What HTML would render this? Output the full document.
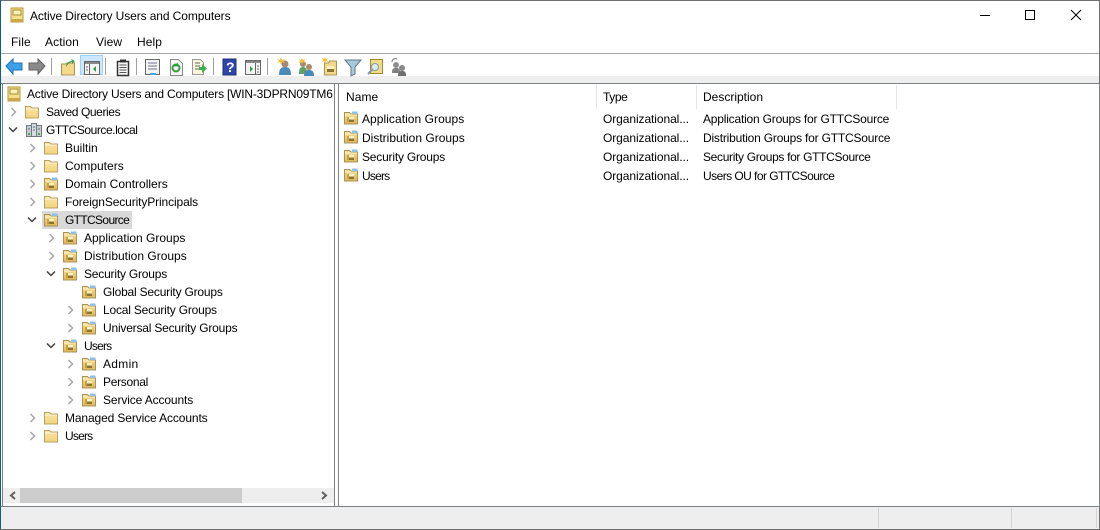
<!DOCTYPE html>
<html><head><meta charset="utf-8"><style>
html,body{margin:0;padding:0;background:#fff}
#w{position:relative;width:1100px;height:530px;overflow:hidden;background:#fff;font-family:"Liberation Sans",sans-serif;font-size:12px;color:#000}
#w div{position:absolute}
.t{white-space:nowrap;line-height:18px;height:18px;letter-spacing:-.2px}
.m{letter-spacing:.1px}
.z{letter-spacing:0}
.u{letter-spacing:-.8px}
.o{letter-spacing:-.08px}
svg{position:absolute;overflow:visible}
</style></head><body><div id="w">
<svg width="0" height="0" style="position:absolute"><defs>
<linearGradient id="g1" x1="0" y1="0" x2="0" y2="1"><stop offset="0" stop-color="#fbe6a4"/><stop offset="1" stop-color="#f3d37e"/></linearGradient>
<linearGradient id="g2" x1="0" y1="0" x2="0" y2="1"><stop offset="0" stop-color="#f9e29a"/><stop offset="1" stop-color="#dfb45a"/></linearGradient>
<symbol id="f" viewBox="0 0 16 14"><path d="M1.500 3V1.500h5L8 3h6.500v10h-13z" fill="url(#g1)" stroke="#b8a060"/><path d="M2 4h12" stroke="#fff6d6"/></symbol>
<symbol id="o" viewBox="0 0 16 14"><path d="M1.500 3V1.500h5L8 3h6.500v10h-13z" fill="url(#g2)" stroke="#a89458"/><rect x="9" y=".5" width="5.500" height="2.500" fill="#8fbfe6"/><path d="M2 4h12" stroke="#fff3c8"/><rect x="4" y="6" width="7" height="5" fill="#fdf2c4"/><rect x="4" y="6" width="2" height="5" fill="#c9a23e"/><rect x="6" y="8.500" width="5" height="2.500" fill="#8a7430"/></symbol>
<symbol id="c" viewBox="0 0 8 10"><path d="M1.500 1l4 4-4 4" fill="none" stroke="#a6a6a6" stroke-width="1.500"/></symbol>
<symbol id="d" viewBox="0 0 10 8"><path d="M1 1.500l4 4 4-4" fill="none" stroke="#404040" stroke-width="1.500"/></symbol>
<symbol id="b" viewBox="0 0 16 16"><rect x="2" y="1" width="12" height="14" fill="#f6e08c" stroke="#b59a3c"/><rect x="4" y="3" width="8" height="5" fill="#fbf0b8" stroke="#a68c34"/><rect x="2" y="12" width="12" height="3" fill="#c9a84a"/></symbol>
</defs></svg>

<!-- window frame -->
<div style="left:0;top:0;width:1100px;height:1px;background:#6e6e6e"></div>
<div style="left:0;top:0;width:1px;height:530px;background:#0f6080"></div>
<div style="left:1099px;top:0;width:1px;height:530px;background:#6e6e6e"></div>
<div style="left:0;top:529px;width:1100px;height:1px;background:#6e6e6e"></div>

<!-- title -->
<svg style="left:9px;top:7px" width="16" height="16"><use href="#b" width="16" height="16"/></svg>
<div class="t" style="left:30px;top:7px;letter-spacing:-.1px">Active Directory Users and Computers</div>
<svg style="left:980px;top:8px" width="100" height="16"><path d="M0 7.500h10" stroke="#000"/><rect x="45.500" y="2.500" width="9" height="9" fill="none" stroke="#000" stroke-width="1"/><path d="M91 2l10 10M101 2L91 12" stroke="#000" fill="none"/></svg>

<!-- menu -->
<div class="t m" style="left:11px;top:33px">File</div>
<div class="t m" style="left:45px;top:33px">Action</div>
<div class="t m" style="left:96px;top:33px">View</div>
<div class="t m" style="left:137px;top:33px">Help</div>
<div style="left:1px;top:53px;width:1098px;height:1px;background:#a5a5ad"></div>

<!-- toolbar -->
<div style="left:1px;top:76px;width:1098px;height:7px;background:#eeeeee"></div>
<div style="left:1px;top:83px;width:1098px;height:1px;background:#7d8287"></div>
<div style="left:80px;top:55px;width:23px;height:20px;background:#cce8ff;border:1px solid #99d1ff;box-sizing:border-box"></div>
<svg style="left:0;top:54px" width="420" height="24">
<path d="M6 12l7-7v4h9v7h-9v4z" fill="#3da0e8" stroke="#2270b8"/>
<path d="M45 12l-7-7v4h-9v7h9v4z" fill="#8a8a8a" stroke="#606060"/>
<path d="M51.500 4v17M105.500 4v17M136.500 4v17M213.500 4v17M267.500 4v17" stroke="#a0a0a0"/>
<path d="M61.500 10h4l1-1h8v12h-13z" fill="#f5d888" stroke="#a89458"/><path d="M66 13c0-4 3-6 6-6l-1-2 4 2-3 3v-2c-2 0-4 2-6 5z" fill="#38a048"/>
<rect x="84.500" y="7.500" width="15" height="13" fill="#f4f4f4" stroke="#666"/><rect x="85" y="8" width="14" height="2" fill="#888"/><path d="M89.500 10v10" stroke="#666"/><path d="M96 12v6l-3-3z" fill="#30a040"/><path d="M86 13h2M86 16h2" stroke="#666"/>
<rect x="117.500" y="7.500" width="11" height="14" fill="#f8f8f8" stroke="#333" stroke-width="1.500"/><rect x="120" y="5.500" width="6" height="3" fill="#333"/><path d="M119.500 11h7M119.500 13.500h7M119.500 16h7M119.500 18.500h7" stroke="#555"/>
<rect x="145.500" y="5.500" width="14" height="15" fill="#f0f2f4" stroke="#666"/><path d="M148 9h9M148 12h9M148 15h9" stroke="#778"/><rect x="150" y="19" width="6" height="2" fill="#40a8e0"/>
<path d="M170.500 5.500h8l4 4v12h-12z" fill="#f6f6f6" stroke="#888"/><circle cx="176" cy="14" r="3.500" fill="none" stroke="#30a040" stroke-width="2"/><path d="M178 8.500v4h-4z" fill="#30a040"/>
<path d="M192.500 5.500h8l3 3v12h-11z" fill="#fbf6dc" stroke="#999"/><path d="M195 9h5M195 12h5M195 15h4" stroke="#666"/><path d="M199 13h3v-3l5 4.500-5 4.500v-3h-3z" fill="#40b050"/>
<rect x="223" y="5" width="13" height="16" fill="#2f45a8" stroke="#1c2c78"/><text x="226" y="18" font-family="Liberation Sans" font-size="14" font-weight="bold" fill="#fff">?</text>
<rect x="245.500" y="6.500" width="15" height="14" fill="#f4f4f4" stroke="#666"/><rect x="246" y="7" width="14" height="2" fill="#888"/><path d="M255.500 9v11" stroke="#666"/><path d="M250 12v6l3-3z" fill="#30a040"/><path d="M257 12h2M257 15h2M257 18h2" stroke="#666"/>
<circle cx="285" cy="10" r="3.500" fill="#a88870"/><path d="M279 21c0-6 2-8 6-8s6 2 6 8z" fill="#4a8ab8"/><path d="M280 6l1-3 1 3 3-1-2 2 2 2-3-1-1 3-1-3-3 1 2-2-2-2z" fill="#f8c030"/>
<circle cx="303" cy="10" r="3" fill="#a88870"/><path d="M299 20c0-5 1-7 4-7s4 2 4 7z" fill="#60a060"/><circle cx="309" cy="13" r="3" fill="#a88870"/><path d="M304 22c0-5 2-6 5-6s5 1 5 6z" fill="#4a8ab8"/><path d="M302 4l1 2 2-1-1 2 1 2-2-1-1 2-1-2-2 1 1-2-1-2 2 1z" fill="#f8c030"/>
<path d="M324.500 9h4l1-2h7v14h-12z" fill="#f5d888" stroke="#a89458"/><rect x="327" y="12" width="7" height="6" fill="#fdf2c4"/><rect x="327" y="15" width="7" height="3" fill="#8a7430"/><path d="M325 3l1 2 2-1-1 2 1 2-2-1-1 2-1-2-2 1 1-2-1-2 2 1z" fill="#f8c030"/>
<path d="M345 6h16l-6 7v7l-4 2v-9z" fill="#a8c8dc" stroke="#607888"/>
<rect x="370.500" y="5.500" width="12" height="14" fill="#f0dc88" stroke="#a08a30"/><circle cx="375" cy="13" r="3.500" fill="#dcecf4" stroke="#8098a8"/><path d="M372 16l-4 4" stroke="#8098a8" stroke-width="2"/>
<circle cx="396" cy="11" r="3" fill="#909090"/><path d="M392 19c0-4 1-5 4-5s4 1 4 5z" fill="#808080"/><circle cx="402" cy="14" r="3" fill="#888"/><path d="M398 22c0-4 1-5 4-5s4 1 4 5z" fill="#707070"/><path d="M392 8c0-3 3-4 5-3" fill="none" stroke="#777"/>
</svg>

<!-- panes -->
<div style="left:2px;top:83px;width:331px;height:423px;border:1px solid #7d8287;background:#fff"></div>
<div style="left:338px;top:83px;width:760px;height:423px;border:1px solid #7d8287;background:#fff"></div>

<!-- selected -->
<div style="left:42px;top:211px;width:90px;height:18px;background:#d9d9d9"></div>

<!-- tree text -->
<div class="t" style="left:27px;top:85px;width:307px;overflow:hidden">Active Directory Users and Computers [WIN-3DPRN09TM6</div>
<div class="t" style="left:46px;top:103px;letter-spacing:-.4px">Saved Queries</div>
<div class="t" style="left:46px;top:121px;letter-spacing:-.45px">GTTCSource.local</div>
<div class="t z" style="left:65px;top:139px">Builtin</div>
<div class="t z" style="left:65px;top:157px">Computers</div>
<div class="t z" style="left:65px;top:175px">Domain Controllers</div>
<div class="t" style="left:65px;top:193px;letter-spacing:-.12px">ForeignSecurityPrincipals</div>
<div class="t" style="left:65px;top:211px;letter-spacing:-.65px">GTTCSource</div>
<div class="t z" style="left:84px;top:229px">Application Groups</div>
<div class="t z" style="left:84px;top:247px">Distribution Groups</div>
<div class="t" style="left:84px;top:265px">Security Groups</div>
<div class="t" style="left:103px;top:283px">Global Security Groups</div>
<div class="t" style="left:103px;top:301px">Local Security Groups</div>
<div class="t" style="left:103px;top:319px">Universal Security Groups</div>
<div class="t u" style="left:84px;top:337px">Users</div>
<div class="t" style="left:103px;top:355px;letter-spacing:.3px">Admin</div>
<div class="t" style="left:103px;top:373px;letter-spacing:-.3px">Personal</div>
<div class="t" style="left:103px;top:391px;letter-spacing:-.12px">Service Accounts</div>
<div class="t" style="left:65px;top:409px;letter-spacing:-.12px">Managed Service Accounts</div>
<div class="t u" style="left:65px;top:427px">Users</div>

<!-- tree icons -->
<svg style="left:0;top:0" width="340" height="480">
<use href="#b" x="6" y="86" width="16" height="16"/>
<use href="#f" x="24" y="105" width="16" height="14"/>
<use href="#f" x="43" y="141" width="16" height="14"/>
<use href="#f" x="43" y="159" width="16" height="14"/>
<use href="#o" x="43" y="177" width="16" height="14"/>
<use href="#f" x="43" y="195" width="16" height="14"/>
<use href="#o" x="43" y="213" width="16" height="14"/>
<use href="#o" x="62" y="231" width="16" height="14"/>
<use href="#o" x="62" y="249" width="16" height="14"/>
<use href="#o" x="62" y="267" width="16" height="14"/>
<use href="#o" x="81" y="285" width="16" height="14"/>
<use href="#o" x="81" y="303" width="16" height="14"/>
<use href="#o" x="81" y="321" width="16" height="14"/>
<use href="#o" x="62" y="339" width="16" height="14"/>
<use href="#o" x="81" y="357" width="16" height="14"/>
<use href="#o" x="81" y="375" width="16" height="14"/>
<use href="#o" x="81" y="393" width="16" height="14"/>
<use href="#f" x="43" y="411" width="16" height="14"/>
<use href="#f" x="43" y="429" width="16" height="14"/>
<!-- domain icon -->
<rect x="26.500" y="125.500" width="5" height="11" fill="#c8ccd0" stroke="#707880"/><rect x="31.500" y="123.500" width="5" height="13" fill="#d8dce0" stroke="#707880"/><rect x="36.500" y="125.500" width="5" height="11" fill="#c8ccd0" stroke="#707880"/><path d="M28 129h2M33 127h2M33 130h2M38 129h2" stroke="#606870"/><rect x="28" y="133" width="2" height="2" fill="#40b040"/><rect x="38" y="133" width="2" height="2" fill="#40b040"/>
<!-- chevrons -->
<use href="#c" x="10" y="107" width="8" height="10"/>
<use href="#d" x="8" y="126" width="10" height="8"/>
<use href="#c" x="29" y="143" width="8" height="10"/>
<use href="#c" x="29" y="161" width="8" height="10"/>
<use href="#c" x="29" y="179" width="8" height="10"/>
<use href="#c" x="29" y="197" width="8" height="10"/>
<use href="#d" x="27" y="216" width="10" height="8"/>
<use href="#c" x="48" y="233" width="8" height="10"/>
<use href="#c" x="48" y="251" width="8" height="10"/>
<use href="#d" x="46" y="270" width="10" height="8"/>
<use href="#c" x="67" y="305" width="8" height="10"/>
<use href="#c" x="67" y="323" width="8" height="10"/>
<use href="#d" x="46" y="342" width="10" height="8"/>
<use href="#c" x="67" y="359" width="8" height="10"/>
<use href="#c" x="67" y="377" width="8" height="10"/>
<use href="#c" x="67" y="395" width="8" height="10"/>
<use href="#c" x="29" y="413" width="8" height="10"/>
<use href="#c" x="29" y="431" width="8" height="10"/>
</svg>

<!-- tree scrollbar -->
<div style="left:3px;top:488px;width:331px;height:15px;background:#eeeeee"></div>
<div style="left:20px;top:488px;width:222px;height:15px;background:#cccccc"></div>
<svg style="left:3px;top:488px" width="331" height="15"><path d="M12 4l-4 3.500 4 3.500M319 4l4 3.500-4 3.500" fill="none" stroke="#606060" stroke-width="2"/></svg>

<!-- list headers -->
<div class="t" style="left:346px;top:88px;letter-spacing:.05px">Name</div>
<div class="t" style="left:603px;top:88px;letter-spacing:-.4px">Type</div>
<div class="t z" style="left:703px;top:88px">Description</div>
<div style="left:596px;top:85px;width:1px;height:24px;background:#e5e5e5"></div>
<div style="left:696px;top:85px;width:1px;height:24px;background:#e5e5e5"></div>
<div style="left:896px;top:85px;width:1px;height:24px;background:#e5e5e5"></div>

<!-- list rows -->
<svg style="left:0;top:0" width="400" height="200">
<use href="#o" x="343" y="111" width="16" height="14"/>
<use href="#o" x="343" y="130" width="16" height="14"/>
<use href="#o" x="343" y="149" width="16" height="14"/>
<use href="#o" x="343" y="168" width="16" height="14"/>
</svg>
<div class="t" style="left:362px;top:110px;letter-spacing:.05px">Application Groups</div>
<div class="t o" style="left:603px;top:110px">Organizational...</div>
<div class="t" style="left:703px;top:110px">Application Groups for GTTCSource</div>
<div class="t z" style="left:362px;top:129px">Distribution Groups</div>
<div class="t o" style="left:603px;top:129px">Organizational...</div>
<div class="t" style="left:703px;top:129px">Distribution Groups for GTTCSource</div>
<div class="t" style="left:362px;top:148px">Security Groups</div>
<div class="t o" style="left:603px;top:148px">Organizational...</div>
<div class="t" style="left:703px;top:148px;letter-spacing:-.33px">Security Groups for GTTCSource</div>
<div class="t u" style="left:362px;top:167px">Users</div>
<div class="t o" style="left:603px;top:167px">Organizational...</div>
<div class="t" style="left:703px;top:167px;letter-spacing:-.55px">Users OU for GTTCSource</div>

<!-- status bar -->
<div style="left:1px;top:506px;width:1098px;height:23px;background:#eeeeee;border-top:1px solid #7d8287;box-sizing:border-box"></div>
<div style="left:878px;top:508px;width:1px;height:20px;background:#d4d4d4"></div>
<div style="left:1011px;top:508px;width:1px;height:20px;background:#d4d4d4"></div>
<div style="left:1096px;top:508px;width:1px;height:20px;background:#d4d4d4"></div>
</div></body></html>
